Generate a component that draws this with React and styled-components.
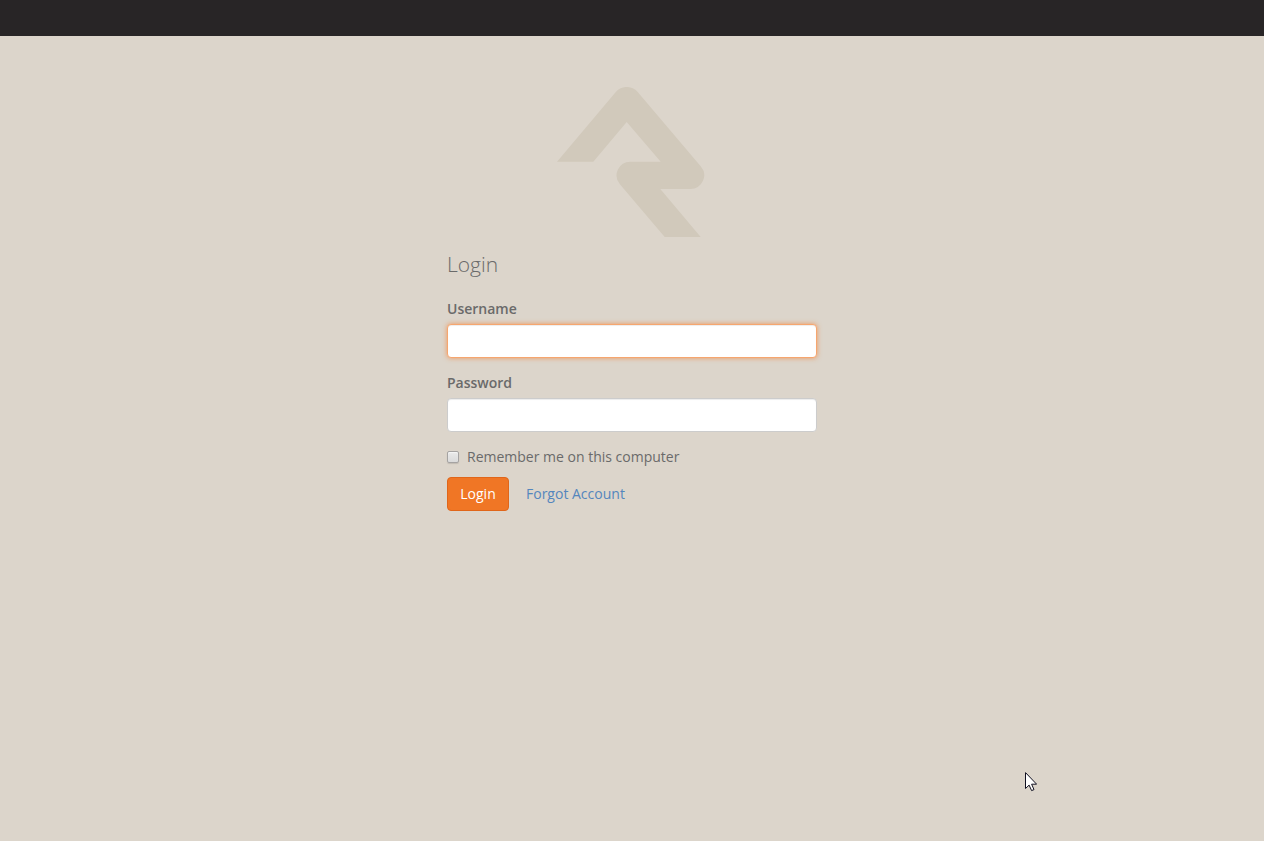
import React from "react";
import styled, { createGlobalStyle, css } from "styled-components";

const GlobalStyle = createGlobalStyle`
  *, *::before, *::after { box-sizing: border-box; }
  body {
    margin: 0;
    background: #dcd5cb;
    color: #6a6a6a;
    font-family: "Open Sans", "Liberation Sans", sans-serif;
    font-size: 14px;
    line-height: 20px;
  }
`;

const TopBar = styled.header`
  height: 36px;
  background: #282526;
`;

const Main = styled.main`
  width: 100%;
  max-width: 402px;
  margin: 0 auto;
  padding: 51px 16px 40px;
`;

const Logo = styled.svg`
  display: block;
  width: 148px;
  height: 150px;
  margin: 0 auto;
  fill: #d1c9bb;
`;

const LogoRow = styled.div`
  padding-right: 2px;
`;

const Title = styled.h1`
  margin: 12px 0 20px;
  font-size: 21px;
  font-weight: 300;
  line-height: 30px;
`;

const Field = styled.div`
  display: flex;
  flex-direction: column;
  gap: 5px;
  margin-bottom: 15px;
`;

const Label = styled.label`
  font-weight: 600;
`;

const TextInput = styled.input`
  width: 100%;
  height: 34px;
  padding: 6px 12px;
  border: 1px solid #cccccc;
  border-radius: 4px;
  background: #ffffff;
  color: #555555;
  font: inherit;
  outline: 0;
  box-shadow: inset 0 1px 1px rgba(0, 0, 0, 0.075);

  ${({ $active }) => $active && css`
    border-color: #f6a66f;
    box-shadow: inset 0 1px 1px rgba(0, 0, 0, 0.075), 0 0 5px rgba(244, 130, 54, 0.75);
  `}
`;

const CheckLabel = styled.label`
  display: flex;
  align-items: center;
  gap: 8px;
  margin-bottom: 10px;
`;

const Checkbox = styled.input`
  appearance: none;
  width: 12px;
  height: 12px;
  margin: 0;
  border: 1px solid #a5a3a2;
  border-radius: 2px;
  background: linear-gradient(#eaeaea, #dadada);
  box-shadow: 0 1px 1px rgba(0, 0, 0, 0.12), inset 0 1px 1px #f5f5f5;

  &:checked { background: #666666; }
`;

const Actions = styled.div`
  display: flex;
  align-items: center;
  gap: 17px;
`;

const LoginButton = styled.button`
  min-width: 62px;
  height: 34px;
  padding: 6px 12px;
  border: 1px solid #e0661a;
  border-radius: 4px;
  background: #f07625;
  color: #ffffff;
  font: inherit;
  cursor: pointer;
`;

const TextLink = styled.a`
  color: #5486bd;
  text-decoration: none;
  &:hover { text-decoration: underline; }
`;

const Pointer = styled.svg`
  position: fixed;
  left: 1025px;
  top: 772px;
  width: 12px;
  height: 20px;
  pointer-events: none;
`;

export default function App() {
  return (
    <>
      <GlobalStyle />
      <TopBar />
      <Main>
        <LogoRow>
          <Logo viewBox="0 0 148 150" aria-hidden="true">
            <path d="M0 74.7 L58.8 5 A14.4 14.4 0 0 1 80.7 5 L143.9 79.5 A13.65 13.65 0 0 1 133.4 102 H103.3 L143.7 150 H107.7 L62.9 97.2 A13.65 13.65 0 0 1 73.3 74.7 H103.7 L69.7 35 L36.3 74.7 Z" />
          </Logo>
        </LogoRow>
        <form onSubmit={(event) => event.preventDefault()}>
          <Title>Login</Title>
          <Field>
            <Label htmlFor="username">Username</Label>
            <TextInput id="username" type="text" autoComplete="username" $active />
          </Field>
          <Field>
            <Label htmlFor="password">Password</Label>
            <TextInput id="password" type="password" autoComplete="current-password" />
          </Field>
          <CheckLabel htmlFor="remember">
            <Checkbox id="remember" type="checkbox" />
            Remember me on this computer
          </CheckLabel>
          <Actions>
            <LoginButton type="submit">Login</LoginButton>
            <TextLink href="#forgot">Forgot Account</TextLink>
          </Actions>
        </form>
      </Main>
      <Pointer viewBox="0 0 12 20" aria-hidden="true">
        <path
          d="M0.5 0.6 V16.5 L4.1 13.1 L6.6 18.6 L9 17.6 L6.6 12.2 H11.6 Z"
          fill="#ffffff"
          stroke="#101020"
          strokeWidth="1"
        />
      </Pointer>
    </>
  );
}
